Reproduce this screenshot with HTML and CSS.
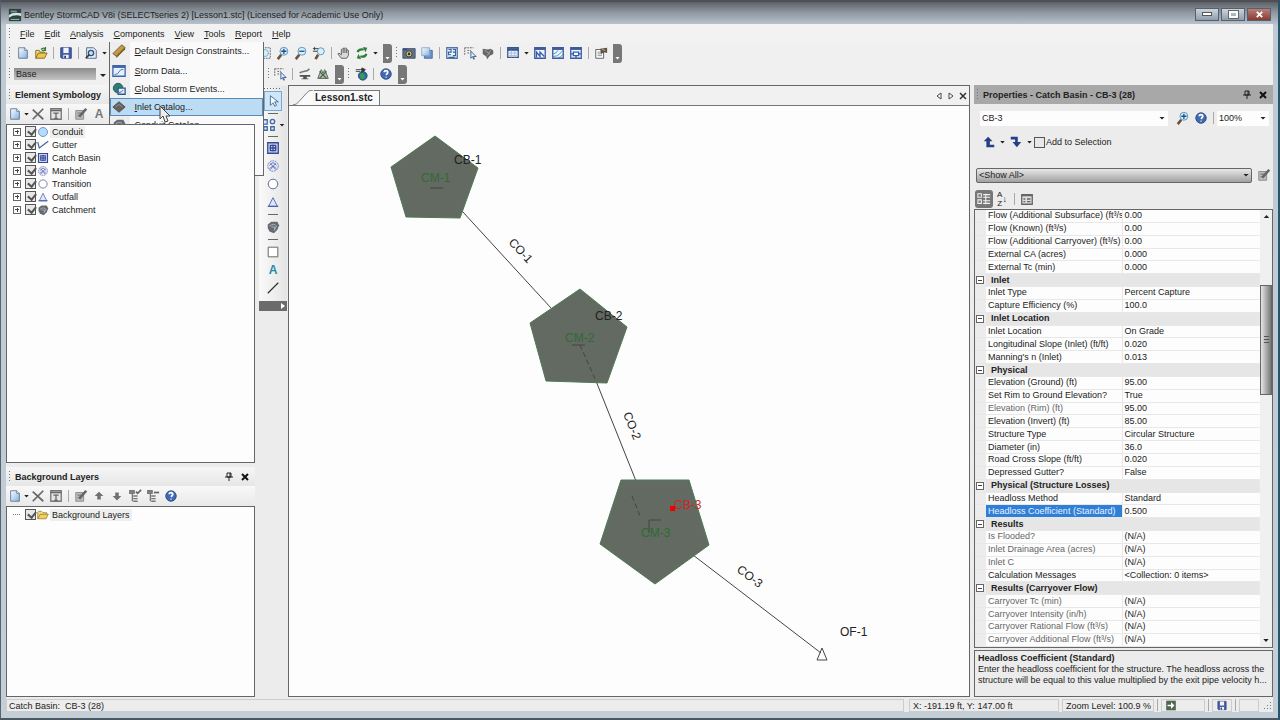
FILE: index.html
```html
<!DOCTYPE html>
<html lang="en">
<head>
  <meta charset="UTF-8">
  <meta name="viewport" content="width=device-width, initial-scale=1.0">
  <title>Bentley StormCAD V8i</title>
  <link rel="stylesheet" href="styles.css">
</head>
<body>
  <!-- icon set -->
  <svg class="defs" aria-hidden="true">
    <linearGradient id="page" x1="0" y1="0" x2="1" y2="1"><stop offset="0" stop-color="#fff"/><stop offset="1" stop-color="#7fb0e0"/></linearGradient>
    <symbol id="new" viewBox="0 0 16 16"><path d="M3 2h7l3 3v9H3z" fill="url(#page)" stroke="#5f7690"/><path d="M10 2v3h3" fill="#fff" stroke="#5f7690"/></symbol>
    <symbol id="open" viewBox="0 0 16 16"><path d="M2 14V5h4l1 2h5v2" fill="#f4dc7a" stroke="#7c6520"/><path d="M2 14l3-6h10l-3 6z" fill="#f0c648" stroke="#7c6520"/><path d="M8 4q3-3 5 0m0-3v4h-4" fill="none" stroke="#2d7a2d" stroke-width="1.5"/></symbol>
    <symbol id="save" viewBox="0 0 16 16"><path d="M2 2h12v12H3l-1-1z" fill="#4660a8" stroke="#2c3c78"/><path d="M5 2h6v6H5zM5 10h6v4H5z" fill="#f2f4fa"/><path d="M6 11h2v3H6z" fill="#2c3c78"/></symbol>
    <symbol id="preview" viewBox="0 0 16 16"><path d="M3 2h8l3 3v9H3z" fill="#e4edf8" stroke="#4a5e80"/><circle cx="8" cy="8" r="3" fill="#c6e2f4" stroke="#33507c" stroke-width="1.5"/><path d="M6 10l-4 4" stroke="#333" stroke-width="2"/></symbol>
    <symbol id="zoomwin" viewBox="0 0 16 16"><path d="M2 2h12v12H2z" fill="none" stroke="#557" stroke-dasharray="2 1"/><circle cx="8" cy="8" r="4" fill="#cdeefa" stroke="#7ab"/></symbol>
    <symbol id="zoomin" viewBox="0 0 16 16"><path d="M6 10l-4 5" stroke="#6d5137" stroke-width="3"/><circle cx="9" cy="6" r="4.500" fill="#d5f1fc" stroke="#548cb8"/><path d="M9 3v6M6 6h6" stroke="#254d88" stroke-width="1.500"/></symbol>
    <symbol id="zoomout" viewBox="0 0 16 16"><path d="M6 10l-4 5" stroke="#6d5137" stroke-width="3"/><circle cx="9" cy="6" r="4.500" fill="#d5f1fc" stroke="#548cb8"/><path d="M6 6h6" stroke="#254d88" stroke-width="1.500"/></symbol>
    <symbol id="zoomprev" viewBox="0 0 16 16"><path d="M7 10l-3 5" stroke="#6d5137" stroke-width="3"/><circle cx="10" cy="6" r="4" fill="#d5f1fc" stroke="#548cb8"/><path d="M1 3h6M3 1v4M1 6h5" stroke="#333"/></symbol>
    <symbol id="hand" viewBox="0 0 16 16"><path d="M5 14l-4-5 1-1 3 2V4l1-1 1 1 1-2 1 1 1-1 1 1v1l2 1v6l-2 3z" fill="#d9d9d9" stroke="#555"/><path d="M7 4v4M9 3v5M11 4v4" stroke="#555"/></symbol>
    <symbol id="refresh" viewBox="0 0 16 16"><path d="M3 7q1-4 7-3M13 9q-1 4-7 3" fill="none" stroke="#2f7d38" stroke-width="2.500"/><path d="M9 1l5 1-2 5zM7 15l-5-1 2-5z" fill="#2f7d38"/></symbol>
    <symbol id="camera" viewBox="0 0 16 16"><path d="M1 3h14v11H1z" fill="#69736f" stroke="#354a8c"/><path d="M1 3h5v2H1z" fill="#354a8c"/><circle cx="8" cy="9" r="3.500" fill="#d0c49c" stroke="#333"/><circle cx="8" cy="9" r="1.500" fill="#333"/></symbol>
    <symbol id="layers" viewBox="0 0 16 16"><path d="M5 5h9v9H5z" fill="#6a94cc" stroke="#46689f"/><path d="M2 2h9v9H2z" fill="url(#page)" stroke="#86a4c8"/></symbol>
    <symbol id="numbers" viewBox="0 0 16 16"><path d="M2 2h12v12H2z" fill="#e8f3fc" stroke="#5376a8" stroke-width="1.500"/><path d="M4 4h3v3H4v3h3M9 4h3v3H9m3 0v4H9M4 13h7" fill="none" stroke="#38609a" stroke-width="1.200"/></symbol>
    <symbol id="pick" viewBox="0 0 16 16"><path d="M2 2h10M2 2v9M5 5h4M5 8h2" fill="none" stroke="#555" stroke-dasharray="2 1"/><path d="M9 6v8l2-2 1 3h1l-1-3h3z" fill="#dff0ff" stroke="#34568c"/></symbol>
    <symbol id="lasso" viewBox="0 0 16 16"><path d="M2 3l6 1 3-1 3 2v4l-4 2-3 4-1-3-4-3z" fill="#666"/><path d="M4 5l6 4M11 5l-4 6" stroke="#aaa"/></symbol>
    <symbol id="flextable" viewBox="0 0 16 16"><path d="M2 2h12v11H2z" fill="#edf3fb" stroke="#35578f" stroke-width="1.500"/><path d="M2 4h12" stroke="#35578f" stroke-width="3"/><path d="M6 5v8M10 5v8M2 8h12M2 11h12" stroke="#a3b8d8"/></symbol>
    <symbol id="profile" viewBox="0 0 16 16"><path d="M2 2h12v12H2z" fill="#edf5ff" stroke="#3d5b9c" stroke-width="1.500"/><path d="M2 3h12" stroke="#3d5b9c" stroke-width="3"/><path d="M4 13V7l4 5V7l5 5" fill="none" stroke="#345bad" stroke-width="1.500"/></symbol>
    <symbol id="contour" viewBox="0 0 16 16"><path d="M2 2h12v12H2z" fill="#edf5ff" stroke="#3d5b9c" stroke-width="1.500"/><path d="M2 3h12" stroke="#3d5b9c" stroke-width="3"/><path d="M2 9q4 0 6-4M2 12q6 0 8-3t4-4M7 14q5-1 7-5" fill="none" stroke="#3c8ac0"/></symbol>
    <symbol id="network" viewBox="0 0 16 16"><path d="M2 2h12v12H2z" fill="#edf5ff" stroke="#3d5b9c" stroke-width="1.500"/><path d="M2 3h12" stroke="#3d5b9c" stroke-width="3"/><path d="M5 7h6v4H5zM8 11v3M2 9h3m6 0h3" fill="#fff" stroke="#345bad" stroke-width="1.500"/></symbol>
    <symbol id="props" viewBox="0 0 16 16"><path d="M2 4h9v10H2z" fill="#fff" stroke="#555"/><path d="M4 7h5M4 9h5M4 11h5" stroke="#888"/><path d="M7 3l8-1v6l-3-1-4 2z" fill="#5c5247"/><path d="M9 4l4 1" stroke="#d0b46c"/></symbol>
    <symbol id="validate" viewBox="0 0 16 16"><path d="M3 6l8-2 2-2M3 6l-1 1" stroke="#777" fill="none" stroke-width="2"/><path d="M2 9h12v2h-4v2h2v1H4v-1h2v-2H2z" fill="#4e554e"/></symbol>
    <symbol id="compute" viewBox="0 0 16 16"><path d="M2 13L6 3l2 4 2-4 4 10z" fill="#b5bdb5" stroke="#4e594e"/><path d="M4 5l8 8M12 5l-8 8" stroke="#3e693f" stroke-width="1.500"/></symbol>
    <symbol id="globe" viewBox="0 0 16 16"><circle cx="10" cy="10" r="5" fill="#226da4" stroke="#29496f"/><path d="M7 8q3-3 5 1t-3 5q-3-2-2-6" fill="#3f9950"/><path d="M2 3h8M2 5h5M9 1v5l4-3z" fill="#333" stroke="#333"/></symbol>
    <symbol id="help" viewBox="0 0 16 16"><circle cx="8" cy="8" r="6" fill="#4069b4" stroke="#2b467c"/><path d="M6 6q0-2 2-2t2 2q0 1-2 3m0 2v1" fill="none" stroke="#fff" stroke-width="2"/></symbol>
    <symbol id="delete" viewBox="0 0 16 16"><path d="M2 3l12 11M14 2L2 14" stroke="#686868" stroke-width="2"/></symbol>
    <symbol id="rename" viewBox="0 0 16 16"><path d="M2 2h12v12H2z" fill="#e4e4e4" stroke="#777" stroke-width="1.500"/><path d="M2 4h12M5 7h6M8 7v6M6 13h4" stroke="#666" stroke-width="1.500"/></symbol>
    <symbol id="edit" viewBox="0 0 16 16"><path d="M2 4h9v10H2z" fill="#bbb" stroke="#888"/><path d="M4 7h4M4 10h3" stroke="#666"/><path d="M6 11l8-9" stroke="#666" stroke-width="3"/></symbol>
    <symbol id="up" viewBox="0 0 16 16"><path d="M8 3l5 5h-3v4H6V8H3z" fill="#707070"/></symbol>
    <symbol id="down" viewBox="0 0 16 16"><path d="M8 13L3 8h3V4h4v4h3z" fill="#707070"/></symbol>
    <symbol id="expand" viewBox="0 0 16 16"><path d="M2 2h5v3H2zM6 8h5M6 11h5M6 14h5M5 5v9" fill="#888" stroke="#777" stroke-width="1.500"/><path d="M9 3l2 2 4-4" fill="none" stroke="#666" stroke-width="2"/></symbol>
    <symbol id="collapse" viewBox="0 0 16 16"><path d="M2 2h5v3H2zM6 8h5M6 11h5M6 14h5M5 5v9" fill="#888" stroke="#777" stroke-width="1.500"/><path d="M9 4h6" stroke="#666" stroke-width="2"/></symbol>
    <symbol id="arrow" viewBox="0 0 16 16"><path d="M5 2v11l3-3 2 4 2-1-2-4h4z" fill="#f5faff" stroke="#41648f"/></symbol>
    <symbol id="layout" viewBox="0 0 16 16"><path d="M1 2h5v5H1zM2 10h4v4H2zM10 10h4v4h-4z" fill="#dcecff" stroke="#4569a5" stroke-width="1.500"/><circle cx="12" cy="4" r="2.500" fill="#dcecff" stroke="#4569a5" stroke-width="1.500"/></symbol>
    <symbol id="basin" viewBox="0 0 16 16"><path d="M2 2h12v12H2z" fill="#cdd6f4" stroke="#364895" stroke-width="1.500"/><path d="M5 5h6v6H5zM8 4v8M4 8h8" fill="none" stroke="#364895" stroke-width="1.500"/></symbol>
    <symbol id="manhole" viewBox="0 0 16 16"><circle cx="8" cy="8" r="6" fill="#e2e5fa" stroke="#6572a9" stroke-dasharray="2 1"/><path d="M4 7l4-3 4 3M4 11l4-3 4 3M5 5l6 7M11 5l-6 7" fill="none" stroke="#6572a9"/></symbol>
    <symbol id="transition" viewBox="0 0 16 16"><circle cx="8" cy="8" r="5.500" fill="#fff" stroke="#4d5a88"/></symbol>
    <symbol id="outfall" viewBox="0 0 16 16"><path d="M8 3l5 10H3z" fill="#dce7ff" stroke="#4c61a8"/><path d="M2 13h12" stroke="#4c61a8" stroke-width="1.500"/></symbol>
    <symbol id="catchment" viewBox="0 0 16 16"><path d="M2 5l4-3h7l2 4-2 5-4 4-5-2-2-4z" fill="#656a70"/><path d="M4 7q5-4 8 0l-3 5M6 8h4v3" fill="none" stroke="#b5bdc5"/></symbol>
    <symbol id="conduit" viewBox="0 0 16 16"><circle cx="8" cy="8" r="6" fill="#b7dbfc" stroke="#4c7ebb"/></symbol>
    <symbol id="gutter" viewBox="0 0 16 16"><path d="M1 4l2 8L15 3" fill="none" stroke="#42669d" stroke-width="1.500"/></symbol>
    <symbol id="rect" viewBox="0 0 16 16"><path d="M2.500 2.500h11v11h-11z" fill="#fff" stroke="#555"/></symbol>
    <symbol id="diag" viewBox="0 0 16 16"><path d="M2 14L14 2" stroke="#333" stroke-width="1.500"/></symbol>
    <symbol id="folder" viewBox="0 0 16 16"><path d="M1 13V4l1-1h4l2 2h5v2" fill="#f6df88" stroke="#93752a"/><path d="M1 13l3-6h11l-3 6z" fill="#f3cf5e" stroke="#93752a"/></symbol>
    <symbol id="ruler" viewBox="0 0 16 16"><path d="M1 11L11 1l4 3L5 14z" fill="#c39a45" stroke="#6d5127"/><path d="M5 14l10-10v2L5 16z" fill="#6d5127"/></symbol>
    <symbol id="storm" viewBox="0 0 16 16"><path d="M1 2h14v12H1z" fill="#e5f1ff" stroke="#3f66a8" stroke-width="1.500"/><path d="M1 3h14" stroke="#3f66a8" stroke-width="3"/><path d="M3 12q4 0 5-3t5-3" fill="none" stroke="#3f66a8"/></symbol>
    <symbol id="events" viewBox="0 0 16 16"><circle cx="7" cy="7" r="5.500" fill="#2d8069" stroke="#234f69"/><path d="M7 7h8v7H7z" fill="#e5f1ff" stroke="#2e5a94" stroke-width="1.500"/><path d="M8 12q3 0 5-3" fill="none" stroke="#2e5a94"/></symbol>
    <symbol id="inlet" viewBox="0 0 16 16"><path d="M1 8l7-6 7 6-7 6z" fill="#67625a" stroke="#4d4d4d"/><path d="M4 8l4-3 4 3" fill="none" stroke="#99948a"/></symbol>
    <symbol id="pin" viewBox="0 0 10 10"><path d="M3 1h4v4H3zM1 5h8M5 5v4" fill="none" stroke="#222"/><path d="M6 1v4" stroke="#222"/></symbol>
    <symbol id="close" viewBox="0 0 10 10"><path d="M2 2l6 6M8 2L2 8" stroke="#111" stroke-width="2"/></symbol>
    <symbol id="goup" viewBox="0 0 16 16"><path d="M7 2l5 5H9v4h5v3H5V7H2z" fill="#263f86"/></symbol>
    <symbol id="godown" viewBox="0 0 16 16"><path d="M2 2h8v6h4l-5 6-5-6h3V5H2z" fill="#263f86"/></symbol>
    <symbol id="categories" viewBox="0 0 16 16"><path d="M1 2h4v4H1zM1 9h4v4H1zM7 3h8M7 6h8M7 10h8M7 13h8M10 2v12" fill="none" stroke="#f2f2f2" stroke-width="1.200"/></symbol>
    <symbol id="propspage" viewBox="0 0 16 16"><path d="M2 3h12v11H2z" fill="#ddd" stroke="#666" stroke-width="1.500"/><path d="M2 4h12M4 8h2M8 8h4M4 11h2M8 11h4" stroke="#666" stroke-width="1.500"/></symbol>
    <symbol id="go" viewBox="0 0 16 16"><path d="M1 1h14v14H1z" fill="#4d684e"/><path d="M3 7h5V3l5 5-5 5V9H3z" fill="#fff"/></symbol>
    <symbol id="app" viewBox="0 0 16 16"><path d="M1 1h14v14H1z" fill="#30403f"/><path d="M1 8q5-4 14-2v3q-8-2-14 2z" fill="#d5e5e5"/><path d="M3 3h7v2H3z" fill="#6f9a94"/><path d="M3 13h10" stroke="#8db" /></symbol>
  </svg>

  <div class="window">
    <header class="titlebar">
      <svg class="icon"><use href="#app"/></svg>
      <h1>Bentley StormCAD V8i (SELECTseries 2) [Lesson1.stc] (Licensed for Academic Use Only)</h1>
      <button class="winbtn" aria-label="Minimize"><i class="min"></i></button>
      <button class="winbtn" aria-label="Maximize"><i class="max"></i></button>
      <button class="winbtn winclose" aria-label="Close"><svg viewBox="0 0 10 10"><path d="M2 2l6 6M8 2L2 8" stroke="#fff" stroke-width="2"/></svg></button>
    </header>

    <div class="client">
      <nav class="menubar">
        <i class="grip"></i>
        <button><u>F</u>ile</button>
        <button><u>E</u>dit</button>
        <button><u>A</u>nalysis</button>
        <div class="dropdown">
          <button><u>C</u>omponents</button>
          <div class="menu">
            <button><svg class="icon"><use href="#ruler"/></svg><span><u>D</u>efault Design Constraints...</span></button>
            <hr>
            <button><svg class="icon"><use href="#storm"/></svg><span><u>S</u>torm Data...</span></button>
            <button><svg class="icon"><use href="#events"/></svg><span><u>G</u>lobal Storm Events...</span></button>
            <button class="hover"><svg class="icon"><use href="#inlet"/></svg><span><u>I</u>nlet Catalog...</span></button>
            <button><svg class="icon"><use href="#catchment"/></svg><span><u>C</u>onduit Catalog...</span></button>
            <svg class="cursor" viewBox="0 0 12 18"><path d="M1 1v13l3-3 2 6 3-1-2-5h4z" fill="#eee" stroke="#444"/></svg>
          </div>
        </div>
        <button><u>V</u>iew</button>
        <button><u>T</u>ools</button>
        <button><u>R</u>eport</button>
        <button><u>H</u>elp</button>
      </nav>

      <div class="toolbar">
        <div class="left-tools">
          <i class="grip"></i>
          <button class="tool" aria-label="New"><svg class="icon"><use href="#new"/></svg></button>
          <button class="tool" aria-label="Open"><svg class="icon"><use href="#open"/></svg></button>
          <i class="sep"></i>
          <button class="tool" aria-label="Save"><svg class="icon"><use href="#save"/></svg></button>
          <i class="sep"></i>
          <button class="tool" aria-label="Print preview"><svg class="icon"><use href="#preview"/></svg></button>
          <i class="caret"></i>
        </div>
        <button class="tool" aria-label="Zoom window"><svg class="icon"><use href="#zoomwin"/></svg></button>
        <button class="tool" aria-label="Zoom in"><svg class="icon"><use href="#zoomin"/></svg></button>
        <button class="tool" aria-label="Zoom out"><svg class="icon"><use href="#zoomout"/></svg></button>
        <button class="tool" aria-label="Zoom previous"><svg class="icon"><use href="#zoomprev"/></svg></button>
        <i class="sep"></i>
        <button class="tool" aria-label="Pan"><svg class="icon"><use href="#hand"/></svg></button>
        <button class="tool" aria-label="Refresh"><svg class="icon"><use href="#refresh"/></svg></button>
        <i class="caret"></i>
        <i class="cap"></i>
        <i class="grip"></i>
        <button class="tool" aria-label="Named views"><svg class="icon"><use href="#camera"/></svg></button>
        <button class="tool" aria-label="Layers"><svg class="icon"><use href="#layers"/></svg></button>
        <i class="sep"></i>
        <button class="tool" aria-label="Scenarios"><svg class="icon"><use href="#numbers"/></svg></button>
        <button class="tool" aria-label="Selection sets"><svg class="icon"><use href="#pick"/></svg></button>
        <button class="tool" aria-label="Prototypes"><svg class="icon"><use href="#lasso"/></svg></button>
        <i class="sep"></i>
        <button class="tool" aria-label="FlexTables"><svg class="icon"><use href="#flextable"/></svg></button>
        <i class="caret"></i>
        <button class="tool" aria-label="Profiles"><svg class="icon"><use href="#profile"/></svg></button>
        <button class="tool" aria-label="Contours"><svg class="icon"><use href="#contour"/></svg></button>
        <button class="tool" aria-label="Network navigator"><svg class="icon"><use href="#network"/></svg></button>
        <i class="sep"></i>
        <button class="tool" aria-label="Properties"><svg class="icon"><use href="#props"/></svg></button>
        <i class="cap"></i>
      </div>

      <div class="toolbar">
        <div class="left-tools">
          <i class="grip"></i>
          <label class="combo scenario"><select aria-label="Scenario"><option>Base</option></select></label>
        </div>
        <i class="grip grip-wide"></i>
        <button class="tool" aria-label="Select"><svg class="icon"><use href="#pick"/></svg></button>
        <i class="sep"></i>
        <button class="tool" aria-label="Validate"><svg class="icon"><use href="#validate"/></svg></button>
        <button class="tool" aria-label="Compute"><svg class="icon"><use href="#compute"/></svg></button>
        <i class="cap"></i>
        <i class="grip"></i>
        <button class="tool" aria-label="Web"><svg class="icon"><use href="#globe"/></svg></button>
        <i class="sep"></i>
        <button class="tool" aria-label="Help"><svg class="icon"><use href="#help"/></svg></button>
        <i class="cap"></i>
      </div>

      <main class="workspace">
        <aside class="sidebar">
          <section class="panel symbology">
            <div class="panel-head"><i class="grip"></i><h2>Element Symbology</h2></div>
            <div class="panel-tools">
              <button class="tool" aria-label="New"><svg class="icon"><use href="#new"/></svg></button>
              <i class="caret"></i>
              <button class="tool" aria-label="Delete"><svg class="icon"><use href="#delete"/></svg></button>
              <button class="tool" aria-label="Rename"><svg class="icon"><use href="#rename"/></svg></button>
              <i class="sep"></i>
              <button class="tool" aria-label="Edit"><svg class="icon"><use href="#edit"/></svg></button>
              <button class="tool letter" aria-label="Annotation">A</button>
            </div>
            <ul class="tree">
              <li><i class="plus"></i><label><input type="checkbox" checked><svg class="icon"><use href="#conduit"/></svg><span class="current">Conduit</span></label></li>
              <li><i class="plus"></i><label><input type="checkbox" checked><svg class="icon"><use href="#gutter"/></svg><span>Gutter</span></label></li>
              <li><i class="plus"></i><label><input type="checkbox" checked><svg class="icon"><use href="#basin"/></svg><span>Catch Basin</span></label></li>
              <li><i class="plus"></i><label><input type="checkbox" checked><svg class="icon"><use href="#manhole"/></svg><span>Manhole</span></label></li>
              <li><i class="plus"></i><label><input type="checkbox" checked><svg class="icon"><use href="#transition"/></svg><span>Transition</span></label></li>
              <li><i class="plus"></i><label><input type="checkbox" checked><svg class="icon"><use href="#outfall"/></svg><span>Outfall</span></label></li>
              <li><i class="plus"></i><label><input type="checkbox" checked><svg class="icon"><use href="#catchment"/></svg><span>Catchment</span></label></li>
            </ul>
          </section>
          <section class="panel background">
            <div class="panel-head">
              <i class="grip"></i><h2>Background Layers</h2>
              <button class="mini" aria-label="Pin"><svg><use href="#pin"/></svg></button>
              <button class="mini" aria-label="Close"><svg><use href="#close"/></svg></button>
            </div>
            <div class="panel-tools">
              <button class="tool" aria-label="New"><svg class="icon"><use href="#new"/></svg></button>
              <i class="caret"></i>
              <button class="tool" aria-label="Delete"><svg class="icon"><use href="#delete"/></svg></button>
              <button class="tool" aria-label="Rename"><svg class="icon"><use href="#rename"/></svg></button>
              <i class="sep"></i>
              <button class="tool" aria-label="Edit"><svg class="icon"><use href="#edit"/></svg></button>
              <button class="tool" aria-label="Move up"><svg class="icon"><use href="#up"/></svg></button>
              <button class="tool" aria-label="Move down"><svg class="icon"><use href="#down"/></svg></button>
              <button class="tool" aria-label="Expand all"><svg class="icon"><use href="#expand"/></svg></button>
              <button class="tool" aria-label="Collapse all"><svg class="icon"><use href="#collapse"/></svg></button>
              <button class="tool" aria-label="Help"><svg class="icon"><use href="#help"/></svg></button>
            </div>
            <ul class="tree">
              <li><i class="dots"></i><label><input type="checkbox" checked><svg class="icon"><use href="#folder"/></svg><span class="current">Background Layers</span></label></li>
            </ul>
          </section>
        </aside>

        <div class="layout-tools">
          <i class="grip-top"></i>
          <button class="tool active" aria-label="Select"><svg class="icon"><use href="#arrow"/></svg></button>
          <i class="line line-tight"></i>
          <div class="with-caret"><button class="tool" aria-label="Layout"><svg class="icon"><use href="#layout"/></svg></button><i class="caret"></i></div>
          <i class="line line-tight"></i>
          <button class="tool" aria-label="Catch basin"><svg class="icon"><use href="#basin"/></svg></button>
          <button class="tool" aria-label="Manhole"><svg class="icon"><use href="#manhole"/></svg></button>
          <button class="tool" aria-label="Transition"><svg class="icon"><use href="#transition"/></svg></button>
          <button class="tool" aria-label="Outfall"><svg class="icon"><use href="#outfall"/></svg></button>
          <i class="line"></i>
          <button class="tool" aria-label="Catchment"><svg class="icon"><use href="#catchment"/></svg></button>
          <i class="line"></i>
          <button class="tool" aria-label="Border"><svg class="icon"><use href="#rect"/></svg></button>
          <button class="tool letter teal" aria-label="Text">A</button>
          <button class="tool" aria-label="Line"><svg class="icon"><use href="#diag"/></svg></button>
          <i class="cap-bottom"></i>
        </div>

        <section class="document">
          <div class="tabs">
            <svg class="slant" viewBox="0 0 22 16"><path d="M0 16Q4 16 7 12L15 3q2-3 7-3v16z" fill="#fafafa"/><path d="M0 16Q4 16 7 12L15 3q2-3 7-3" fill="none" stroke="#777"/></svg>
            <button class="tab">Lesson1.stc</button>
            <div class="tab-nav">
              <button class="mini" aria-label="Previous"><svg viewBox="0 0 10 10"><path d="M7 2v6L3 5z" fill="#fff" stroke="#444"/></svg></button>
              <button class="mini" aria-label="Next"><svg viewBox="0 0 10 10"><path d="M3 2v6l4-3z" fill="#fff" stroke="#444"/></svg></button>
              <button class="mini" aria-label="Close"><svg viewBox="0 0 10 10"><path d="M2 2l6 6M8 2L2 8" stroke="#333" stroke-width="1.500"/></svg></button>
            </div>
          </div>
          <svg class="drawing">
            <g class="pipe">
              <path d="M173 105L262 202M307 275l40 100M404 449l128 98"/>
            </g>
            <g class="area">
              <path d="M146 30l43 32-18 50-54-1-15-50z"/>
              <path d="M291 183l47 38-20 56-61-2-16-58z"/>
              <path d="M332 374h68l20 65-54 39-55-40z"/>
            </g>
            <path class="pipe" d="M141 82h13M283 239h13M360 427v-13h12"/>
            <path class="pipe hidden-pipe" d="M291 239l16 36M343 390l8 20"/>
            <path class="pipe" d="M533 542l5 12h-10z"/>
            <g class="green">
              <text x="132" y="76">CM-1</text>
              <text x="276" y="236">CM-2</text>
              <text x="352" y="431">CM-3</text>
            </g>
            <text x="165" y="58">CB-1</text>
            <text x="306" y="214">CB-2</text>
            <rect x="381" y="400" width="5" height="5" fill="#e00"/>
            <text x="385" y="403" class="red">CB-3</text>
            <text transform="translate(219 137) rotate(47)">CO-1</text>
            <text transform="translate(334 308) rotate(68)">CO-2</text>
            <text transform="translate(447 465) rotate(37)">CO-3</text>
            <text x="551" y="530">OF-1</text>
          </svg>
        </section>

        <aside class="properties">
          <div class="panel-head dark">
            <i class="grip"></i><h2>Properties - Catch Basin - CB-3 (28)</h2>
            <button class="mini" aria-label="Pin"><svg><use href="#pin"/></svg></button>
            <button class="mini" aria-label="Close"><svg><use href="#close"/></svg></button>
          </div>
          <div class="prop-row">
            <label class="combo element"><select aria-label="Element"><option>CB-3</option></select></label>
            <button class="tool" aria-label="Zoom to"><svg class="icon"><use href="#zoomin"/></svg></button>
            <button class="tool" aria-label="Help"><svg class="icon"><use href="#help"/></svg></button>
            <i class="sep"></i>
            <label class="combo percent"><select aria-label="Zoom"><option>100%</option></select></label>
          </div>
          <div class="prop-row add-row">
            <button class="tool" aria-label="Previous"><svg class="icon"><use href="#goup"/></svg></button><i class="caret"></i>
            <button class="tool" aria-label="Next"><svg class="icon"><use href="#godown"/></svg></button><i class="caret"></i>
            <label class="check"><input type="checkbox">Add to Selection</label>
          </div>
          <div class="prop-row filter-row">
            <label class="combo filter"><select aria-label="Filter"><option>&lt;Show All&gt;</option></select></label>
            <button class="tool" aria-label="Edit filter"><svg class="icon"><use href="#edit"/></svg></button>
          </div>
          <div class="prop-row sort-row">
            <button class="tool pressed" aria-label="Categorized"><svg class="icon"><use href="#categories"/></svg></button>
            <button class="tool sort" aria-label="Alphabetical"><span>A<br>Z</span>↓</button>
            <i class="sep"></i>
            <button class="tool" aria-label="Property pages"><svg class="icon"><use href="#propspage"/></svg></button>
          </div>
          <div class="grid-box">
            <table class="grid">
              <tr><td class="gutter"></td><th>Flow (Additional Subsurface) (ft³/s)</th><td>0.00</td></tr>
              <tr><td class="gutter"></td><th>Flow (Known) (ft³/s)</th><td>0.00</td></tr>
              <tr><td class="gutter"></td><th>Flow (Additional Carryover) (ft³/s)</th><td>0.00</td></tr>
              <tr><td class="gutter"></td><th>External CA (acres)</th><td>0.000</td></tr>
              <tr><td class="gutter"></td><th>External Tc (min)</th><td>0.000</td></tr>
              <tr class="group"><td class="gutter"><i class="minus"></i></td><th colspan="2">Inlet</th></tr>
              <tr><td class="gutter"></td><th>Inlet Type</th><td>Percent Capture</td></tr>
              <tr><td class="gutter"></td><th>Capture Efficiency (%)</th><td>100.0</td></tr>
              <tr class="group"><td class="gutter"><i class="minus"></i></td><th colspan="2">Inlet Location</th></tr>
              <tr><td class="gutter"></td><th>Inlet Location</th><td>On Grade</td></tr>
              <tr><td class="gutter"></td><th>Longitudinal Slope (Inlet) (ft/ft)</th><td>0.020</td></tr>
              <tr><td class="gutter"></td><th>Manning's n (Inlet)</th><td>0.013</td></tr>
              <tr class="group"><td class="gutter"><i class="minus"></i></td><th colspan="2">Physical</th></tr>
              <tr><td class="gutter"></td><th>Elevation (Ground) (ft)</th><td>95.00</td></tr>
              <tr><td class="gutter"></td><th>Set Rim to Ground Elevation?</th><td>True</td></tr>
              <tr class="readonly"><td class="gutter"></td><th>Elevation (Rim) (ft)</th><td>95.00</td></tr>
              <tr><td class="gutter"></td><th>Elevation (Invert) (ft)</th><td>85.00</td></tr>
              <tr><td class="gutter"></td><th>Structure Type</th><td>Circular Structure</td></tr>
              <tr><td class="gutter"></td><th>Diameter (in)</th><td>36.0</td></tr>
              <tr><td class="gutter"></td><th>Road Cross Slope (ft/ft)</th><td>0.020</td></tr>
              <tr><td class="gutter"></td><th>Depressed Gutter?</th><td>False</td></tr>
              <tr class="group"><td class="gutter"><i class="minus"></i></td><th colspan="2">Physical (Structure Losses)</th></tr>
              <tr><td class="gutter"></td><th>Headloss Method</th><td>Standard</td></tr>
              <tr class="selected"><td class="gutter"></td><th>Headloss Coefficient (Standard)</th><td>0.500</td></tr>
              <tr class="group"><td class="gutter"><i class="minus"></i></td><th colspan="2">Results</th></tr>
              <tr class="readonly"><td class="gutter"></td><th>Is Flooded?</th><td>(N/A)</td></tr>
              <tr class="readonly"><td class="gutter"></td><th>Inlet Drainage Area (acres)</th><td>(N/A)</td></tr>
              <tr class="readonly"><td class="gutter"></td><th>Inlet C</th><td>(N/A)</td></tr>
              <tr><td class="gutter"></td><th>Calculation Messages</th><td>&lt;Collection: 0 items&gt;</td></tr>
              <tr class="group"><td class="gutter"><i class="minus"></i></td><th colspan="2">Results (Carryover Flow)</th></tr>
              <tr class="readonly"><td class="gutter"></td><th>Carryover Tc (min)</th><td>(N/A)</td></tr>
              <tr class="readonly"><td class="gutter"></td><th>Carryover Intensity (in/h)</th><td>(N/A)</td></tr>
              <tr class="readonly"><td class="gutter"></td><th>Carryover Rational Flow (ft³/s)</th><td>(N/A)</td></tr>
              <tr class="readonly"><td class="gutter"></td><th>Carryover Additional Flow (ft³/s)</th><td>(N/A)</td></tr>
            </table>
            <div class="scrollbar">
              <i class="caret caret-up"></i>
              <div class="track"><i class="thumb"></i></div>
              <i class="caret"></i>
            </div>
          </div>
          <div class="hint">
            <h3>Headloss Coefficient (Standard)</h3>
            <p>Enter the headloss coefficient for the structure. The headloss across the structure will be equal to this value multiplied by the exit pipe velocity h...</p>
          </div>
        </aside>
      </main>

      <footer class="statusbar">
        <span class="message">Catch Basin:&nbsp; CB-3 (28)</span>
        <span class="coords">X: -191.19 ft, Y: 147.00 ft</span>
        <span class="zoom">Zoom Level: 100.9 %</span>
        <i class="sep"></i>
        <span class="cell"><svg class="icon"><use href="#go"/></svg></span>
        <i class="sep"></i>
        <span class="cell small"><svg class="icon"><use href="#save"/></svg></span>
        <i class="sep"></i>
        <span class="cell small"></span>
        <i class="resize"></i>
      </footer>
    </div>
  </div>
</body>
</html>
```
FILE: styles.css
```css
*{
  box-sizing : border-box
}
html,body{
  height : 100%;
  margin : 0
}
body{
  font : 9px/12px "Liberation Sans", Arial, sans-serif;
  color : #222;
  overflow : hidden
}
button,select,input{
  font : inherit;
  color : inherit;
  margin : 0
}
button{
  padding : 0;
  border : 0;
  background : none
}
h1,h2,h3,p,ul{
  margin : 0;
  padding : 0;
  font-size : inherit
}
i{
  flex : none
}
.defs{
  position : absolute;
  width : 0;
  height : 0
}
.icon{
  display : block;
  flex : none;
  width : 14px;
  height : 14px
}

/* window frame */
.window{
  display : flex;
  flex-direction : column;
  height : 100vh;
  padding : 0 5px 6px;
  background : linear-gradient(#5c6066, #8d959e 10px, #bdc9d3 24px, #c3ced7);
  border-top : 2px solid #4e5056;
  border-left : 1px solid #58636b;
  border-right : 2px solid #27556a;
  border-bottom : 2px solid #4b5862
}
.titlebar{
  display : flex;
  align-items : center;
  flex : none;
  height : 22px;
  gap : 2px;
  padding : 4px 2px 0
}
.titlebar h1{
  flex : 1;
  font-weight : normal;
  color : #222
}
.winbtn{
  display : flex;
  align-items : center;
  justify-content : center;
  width : 24px;
  height : 13px;
  margin-bottom : 2px;
  border : 1px solid #56616c;
  background : linear-gradient(#ccd5de, #8f9dab)
}
.winclose{
  background : linear-gradient(#b88079, #883a34)
}
.winclose svg{
  width : 9px;
  height : 9px
}
.min{
  width : 10px;
  height : 4px;
  border : 1px solid #555;
  background : #fff
}
.max{
  width : 9px;
  height : 7px;
  border : 2px solid #fff;
  outline : 1px solid #666
}
.client{
  display : flex;
  flex-direction : column;
  flex : 1;
  min-height : 0;
  background : #ececec
}

/* menus and toolbars */
.menubar{
  display : flex;
  align-items : center;
  flex : none;
  height : 19px;
  gap : 10px;
  padding-left : 3px;
  background : #f2f2f2
}
.grip{
  width : 3px;
  height : 12px;
  background : repeating-linear-gradient(#777 0 1px, transparent 1px 3px) 0 0 / 1px 100% no-repeat
}
.menubar > .grip{
  margin-right : -2px
}
.dropdown{
  position : relative
}
.menu{
  position : absolute;
  z-index : 2;
  top : 14px;
  left : -5px;
  width : 155px;
  height : 134px;
  border : 1px solid #666;
  border-top : 0;
  background : linear-gradient(90deg, #eee 20px, #fafafa 20px)
}
.menu button{
  display : flex;
  align-items : center;
  width : 100%;
  height : 18px;
  gap : 9px;
  padding-left : 2px;
  white-space : nowrap
}
.menu hr{
  height : 2px;
  margin : 0;
  border : 0
}
.menu .hover{
  background : #bcdcf4;
  box-shadow : inset 0 0 0 1px #5a8bb8
}
.cursor{
  position : absolute;
  left : 49px;
  top : 63px;
  width : 12px;
  height : 18px
}
.toolbar{
  display : flex;
  align-items : center;
  flex : none;
  height : 20px;
  background : #f0f0f0
}
.toolbar + .toolbar{
  height : 22px
}
.toolbar > .grip{
  margin : 0 1px
}
.left-tools{
  display : flex;
  align-items : center;
  flex : none;
  width : 250px;
  padding-left : 3px
}
.left-tools .grip{
  margin-right : 2px
}
.tool{
  display : flex;
  flex : none;
  align-items : center;
  justify-content : center;
  width : 18px;
  height : 18px
}
.sep{
  width : 1px;
  height : 12px;
  margin : 0 3px;
  background : #aaa
}
.caret{
  width : 9px;
  height : 3px;
  background : #222;
  clip-path : polygon(20% 0, 80% 0, 50% 100%)
}
.cap{
  width : 9px;
  height : 19px;
  margin : 0 3px;
  background : #777;
  border-radius : 0 3px 3px 0
}
.cap::after{
  content : "";
  display : block;
  width : 5px;
  height : 3px;
  margin : 13px 2px 0;
  background : #fff;
  clip-path : polygon(0 0, 100% 0, 50% 100%)
}
.toolbar > .grip-wide{
  margin : 0 0 0 12px
}
.letter{
  font-weight : bold;
  font-size : 12px;
  color : #777
}
.teal{
  color : #268aa5
}
.combo{
  position : relative;
  display : flex;
  min-width : 0
}
.combo::after{
  content : "";
  position : absolute;
  right : 3px;
  top : 6px;
  width : 6px;
  height : 3px;
  background : #222;
  clip-path : polygon(0 0, 100% 0, 50% 100%)
}
.combo select{
  appearance : none;
  width : 100%;
  height : 15px;
  padding : 0 2px;
  border : 0;
  border-radius : 0;
  background : #fdfdfd
}
.scenario{
  width : 95px
}
.scenario select{
  height : 12px;
  background : linear-gradient(90deg, transparent 82px, #f0f0f0 82px), linear-gradient(#8c8c8c, #c4c4c4)
}

/* side panels */
.workspace{
  display : flex;
  flex : 1;
  min-height : 0
}
.sidebar{
  display : flex;
  flex-direction : column;
  flex : none;
  width : 249px;
  gap : 4px
}
.panel{
  display : flex;
  flex-direction : column
}
.symbology{
  flex : 2
}
.background{
  flex : none;
  height : 32%;
  min-height : 230px
}
.panel-head{
  display : flex;
  flex : none;
  align-items : center;
  height : 19px;
  padding : 0 4px 0 3px;
  gap : 3px;
  background : linear-gradient(#f6f6f6, #e6e6e6)
}
.panel-head h2{
  flex : 1
}
.dark{
  background : #a8a8a8
}
.mini{
  width : 12px;
  height : 12px
}
.mini svg{
  display : block;
  width : 10px;
  height : 10px;
  margin : 0 auto
}
.panel-head .mini + .mini{
  margin-left : 1px
}
.panel-tools{
  display : flex;
  flex : none;
  align-items : center;
  height : 20px;
  background : linear-gradient(#f8f8f8, #e9e9e9)
}
.panel-tools .caret{
  margin : 0 -2px
}
.tree{
  position : relative;
  z-index : 3;
  flex : 1;
  padding : 0 6px;
  list-style : none;
  border : 1px solid #666;
  background : #fdfdfd
}
.tree li{
  display : flex;
  align-items : center;
  height : 13px;
  gap : 4px
}
.tree label{
  display : flex;
  align-items : center;
  gap : 1px
}
.tree .icon{
  width : 12px;
  height : 12px
}
.tree span{
  padding : 0 2px
}
.current{
  background : #efefef
}
input[type="checkbox"]{
  appearance : none;
  flex : none;
  width : 11px;
  height : 11px;
  border : 1px solid #555;
  background : #e8e8e8
}
input[type="checkbox"]:checked::before{
  content : "";
  display : block;
  width : 4px;
  height : 6px;
  margin : 0 0 0 3px;
  border : solid #555;
  border-width : 0 2px 2px 0;
  transform : rotate(40deg)
}
.plus,.minus{
  display : block;
  width : 8px;
  height : 8px;
  border : 1px solid #666;
  background : linear-gradient(#444, #444) center / 4px 1px no-repeat, #fff
}
.plus{
  background : linear-gradient(#444, #444) center / 4px 1px no-repeat, linear-gradient(#444, #444) center / 1px 4px no-repeat, #fff
}
.dots{
  width : 8px;
  height : 1px;
  background : repeating-linear-gradient(90deg, #777 0 1px, transparent 1px 2px)
}
.background .tree li{
  height : 15px
}

/* drawing tools */
.layout-tools{
  display : flex;
  flex-direction : column;
  align-items : center;
  align-self : flex-start;
  flex : none;
  width : 28px;
  margin : 1px 1px 0 4px;
  background : linear-gradient(90deg, #fafafa, #e4e4e4)
}
.grip-top{
  width : 18px;
  height : 1px;
  margin : 2px 0;
  background : repeating-linear-gradient(90deg, #666 0 1px, transparent 1px 3px)
}
.layout-tools .active{
  height : 20px;
  border : 1px solid #7ba7cf;
  background : #cfe5f8
}
.line{
  width : 10px;
  height : 1px;
  margin : 3px 0;
  background : #666
}
.line-tight{
  margin : 2px 0
}
.with-caret{
  display : flex;
  align-items : center
}
.cap-bottom{
  width : 28px;
  height : 10px;
  margin-top : 4px;
  background : #6b6b6b
}
.cap-bottom::after{
  content : "";
  display : block;
  width : 4px;
  height : 6px;
  margin : 2px 0 0 22px;
  background : #fff;
  clip-path : polygon(0 0, 100% 50%, 0 100%)
}

/* document */
.document{
  display : flex;
  flex-direction : column;
  flex : 1;
  min-width : 0;
  border : 1px solid #666;
  background : #fdfdfd
}
.tabs{
  display : flex;
  align-items : flex-end;
  flex : none;
  height : 20px;
  padding-left : 3px;
  background : #f1f1f1;
  border-bottom : 1px solid #777
}
.slant{
  width : 22px;
  height : 15px
}
.tab{
  height : 15px;
  padding : 0 6px 0 1px;
  border-top : 1px solid #777;
  border-right : 1px solid #777;
  background : #fafafa;
  font-size : 10px;
  font-weight : bold
}
.tab-nav{
  display : flex;
  align-self : center;
  margin-left : auto
}
.drawing{
  flex : 1;
  width : 100%;
  min-height : 0;
  font : 12px "Liberation Sans", sans-serif
}
.drawing text{
  fill : #222
}
.drawing .green text{
  fill : #2f6b34
}
.drawing .red{
  fill : #d02525
}
.pipe{
  fill : none;
  stroke : #444
}
.hidden-pipe{
  stroke-dasharray : 5 3
}
.area{
  fill : #626a62;
  stroke : #4f7a55
}

/* properties */
.properties{
  display : flex;
  flex-direction : column;
  flex : none;
  width : 299px;
  margin-left : 4px
}
.prop-row{
  display : flex;
  align-items : center;
  flex : none;
  height : 20px;
  margin-top : 4px;
  padding : 0 4px 0 6px
}
.element{
  flex : 1;
  margin-right : 6px
}
.percent{
  width : 52px
}
.check{
  display : flex;
  align-items : center;
  gap : 1px
}
.filter-row{
  margin-top : 13px;
  padding : 0 0 0 2px;
  gap : 3px
}
.filter{
  flex : 1
}
.filter select{
  border : 1px solid #666;
  border-radius : 2px;
  background : linear-gradient(#e8e8e8, #a0a0a0)
}
.sort-row{
  padding-left : 1px
}
.pressed{
  background : #777;
  border-radius : 3px
}
.sort{
  font-size : 9px
}
.sort span{
  font-size : 8px;
  line-height : 9px
}
.grid-box{
  display : flex;
  flex : 1;
  min-height : 0;
  border : 1px solid #666;
  background : #fdfdfd
}
.grid{
  flex : 1;
  width : 100%;
  min-width : 0;
  height : 100%;
  table-layout : fixed;
  border-collapse : collapse;
  line-height : 11px
}
.grid td,.grid th{
  padding : 0 0 0 2px;
  overflow : hidden;
  white-space : nowrap;
  text-align : left;
  font-weight : normal;
  border-bottom : 1px solid #e8e8e8
}
.grid th{
  width : 136px;
  border-right : 1px solid #e8e8e8
}
.grid .gutter{
  width : 11px;
  padding : 0 0 0 1px;
  background : #ececec
}
.grid .group th{
  padding-left : 5px;
  font-weight : bold;
  background : #e6e6e6
}
.grid .readonly th{
  color : #666
}
.grid .selected th{
  background : #2f7fd8;
  color : #e8f2ff
}
.scrollbar{
  display : flex;
  flex-direction : column;
  align-items : center;
  flex : none;
  width : 12px;
  padding : 5px 0;
  background : #f0f0f0
}
.caret-up{
  transform : rotate(180deg)
}
.track{
  flex : 1;
  width : 100%;
  padding-top : 67px
}
.thumb{
  display : block;
  height : 31%;
  border : 1px solid #666;
  background : repeating-linear-gradient(#555 0 1px, transparent 1px 3px) center / 5px 7px no-repeat, linear-gradient(90deg, #e6e6e6, #777)
}
.hint{
  flex : none;
  min-height : 47px;
  margin-top : 2px;
  padding : 1px 3px;
  border : 1px solid #666
}
.hint p{
  line-height : 11px
}

/* status bar */
.statusbar{
  display : flex;
  align-items : center;
  flex : none;
  height : 15px;
  padding : 1px 2px 0 0
}
.statusbar span{
  height : 13px;
  padding : 0 3px;
  white-space : nowrap;
  border : 1px solid #ccc
}
.statusbar .message{
  flex : 1;
  padding-left : 2px
}
.coords{
  width : 150px;
  margin-left : 5px
}
.zoom{
  width : 92px;
  margin-left : 3px
}
.statusbar .cell{
  width : 44px
}
.statusbar .small{
  width : 20px
}
.cell .icon{
  width : 12px;
  height : 11px
}
.resize{
  width : 8px;
  height : 8px;
  margin-left : 4px;
  background : radial-gradient(#777 1px, transparent 1px) 0 0 / 3px 3px;
  clip-path : polygon(100% 0, 100% 100%, 0 100%)
}
```
